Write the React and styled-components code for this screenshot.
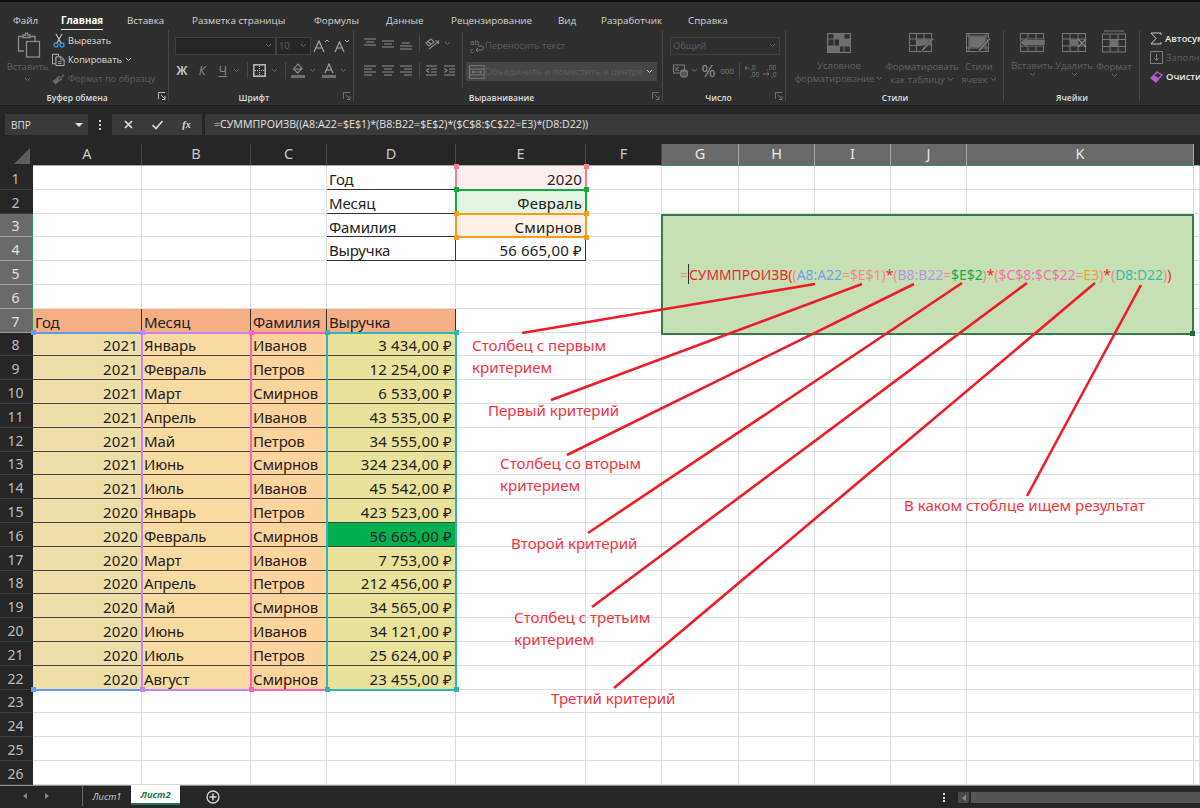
import React from "react";
import styled, { createGlobalStyle } from "styled-components";

const UI = `"Open Sans", "Noto Sans", "Liberation Sans", sans-serif`;
const CELLF = `"Noto Sans", "Open Sans", "Liberation Sans", sans-serif`;

const Global = createGlobalStyle`
  html, body { margin: 0; padding: 0; background: #262626; }
  * { box-sizing: border-box; }
`;

const Page = styled.div`
  position: relative; width: 1200px; height: 808px; overflow: hidden;
  display: flex; flex-direction: column; background: #262626; font-family: ${UI};
`;
const TabBar = styled.div`
  height: 30px; flex: none; background: #2f2f2f; border-top: 2px solid #0f0f0f;
  display: flex; align-items: flex-start; padding: 5px 0 0 13px;
`;
const Tab = styled.div`
  width: ${p => p.$w}px; flex: none; height: 18px;
`;
const TabText = styled.span`
  display: inline-block; font-size: 9.8px; line-height: 16px; height: 18px; white-space: nowrap;
  color: ${p => (p.$active ? "#fff" : "#d4d4d4")}; font-weight: ${p => (p.$active ? 700 : 400)};
  border-bottom: ${p => (p.$active ? "2px solid #e8e8e8" : "none")};
`;
const Ribbon = styled.div`
  height: 76px; flex: none; background: #2f2f2f; display: flex; overflow: hidden;
  border-bottom: 1px solid #1b1b1b;
`;
const Group = styled.div`
  position: relative; width: ${p => p.$w}px; flex: none; display: flex; flex-direction: column;
  &::after { content: ""; display: ${p => (p.$last ? "none" : "block")}; position: absolute; right: 0; top: 0; bottom: 4px; width: 1px; background: #474747; }
`;
const GroupBody = styled.div`
  flex: 1; display: flex; padding-left: ${p => p.$pl || 0}px; padding-top: ${p => p.$pt || 0}px; min-height: 0;
  flex-direction: ${p => p.$col ? "column" : "row"}; gap: ${p => p.$gap || 0}px;
`;
const SubCol = styled.div`
  width: ${p => p.$w}px; flex: none; display: flex; flex-direction: column; gap: ${p => p.$gap}px; padding: ${p => p.$pt}px 0 0 ${p => p.$pl || 0}px;
`;
const TallSep = styled.span`
  width: 1px; height: 56px; margin-top: 2px; background: #474747; flex: none;
`;
const GroupLabel = styled.div`
  height: 14px; line-height: 14px; font-size: 8.5px; font-weight: 600; color: #dcdcdc; text-align: center; flex: none;
  padding-right: ${p => p.$pr || 0}px;
`;
const Launcher = styled.svg`
  position: absolute; right: 3px; bottom: 5px; width: 8px; height: 8px; color: ${p => p.$dim ? "#6f6f6f" : "#b8b8b8"};
`;
const PasteBlock = styled.div`
  width: 55px; display: flex; flex-direction: column; align-items: center; padding-top: 2px; color: #8a8a8a;
  & > svg:first-child { margin-left: 3px; }
`;
const BigLabel = styled.div`
  font-size: 9.4px; line-height: 13px; color: #626262; text-align: center; white-space: nowrap; margin-top: ${p => p.$mt || 0}px;
  display: flex; align-items: center; justify-content: center; gap: 2px;
`;
const ChevronSvg = styled.svg`
  width: 7px; height: 5px; flex: none; color: ${p => p.$c || "#6a6a6a"};
`;
const ClipList = styled.div`
  display: flex; flex-direction: column; padding-top: 1px; margin-left: -3px;
`;
const ClipRow = styled.div`
  height: 19px; display: flex; align-items: center; gap: 3px; font-size: 9.2px; white-space: nowrap;
  color: ${p => p.$dim ? "#5f5f5f" : "#dedede"};
`;
const IconSlot = styled.span`
  width: ${p => p.$w}px; flex: none; display: flex; justify-content: center; align-items: center;
  margin-left: ${p => p.$ml || 0}px; color: ${p => p.$c || "#a8a8a8"}; font-size: 11px; font-weight: ${p => p.$bold ? 700 : 400};
  font-style: ${p => p.$it ? "italic" : "normal"}; text-decoration: ${p => p.$un ? "underline" : "none"};
  font-family: ${UI};
`;
const ToolRow = styled.div`
  display: flex; align-items: center; height: ${p => p.$h || 19}px; flex: none; padding-left: ${p => p.$pl || 0}px;
`;
const VSep = styled.span`
  width: 1px; height: 17px; background: #484848; flex: none; margin-left: ${p => p.$ml || 0}px;
`;
const Combo = styled.div`
  width: ${p => p.$w}px; height: 18px; flex: none; background: ${p => p.$bg || "#262626"}; border: 1px solid #414141;
  display: flex; align-items: center; justify-content: space-between; padding: 0 3px 0 2px;
  font-size: 9.4px; color: #606060; margin-left: ${p => p.$ml || 0}px;
`;
const InlineText = styled.span`
  font-size: 9.3px; white-space: nowrap; color: #5d5d5d; margin-left: ${p => p.$ml || 0}px; flex: ${p => p.$grow ? 1 : "none"};
`;
const MergeButton = styled.div`
  width: 191px; height: 19px; flex: none; background: #454545; display: flex; align-items: center; padding-left: 3px;
`;
const BigTool = styled.div`
  width: ${p => p.$w}px; flex: none; display: flex; flex-direction: column; align-items: center; padding-top: ${p => p.$pt ?? 3}px; color: #777;
  margin-left: ${p => p.$ml || 0}px;
`;
const EditList = styled.div`
  display: flex; flex-direction: column; padding: 0 0 0 10px; margin-top: -1px;
`;
const EditRow = styled.div`
  height: 19px; display: flex; align-items: center; gap: 3px; font-size: 9.4px; white-space: nowrap; font-weight: ${p => p.$dim ? 400 : 600};
  color: ${p => p.$dim ? "#5f5f5f" : "#e6e6e6"};
  svg { flex: none; }
`;

const Spacer = styled.div`
  height: 8px; flex: none; background: #262626;
`;
const FormulaBar = styled.div`
  height: 21px; flex: none; display: flex; background: #262626; padding-left: 5px; align-items: stretch;
`;
const NameBox = styled.div`
  width: 83px; background: #3a3a3a; color: #dcdcdc; font-size: 10px; display: flex; align-items: center; justify-content: space-between; padding: 0 5px 0 6px;
`;
const Caret = styled.span`
  width: 0; height: 0; border-left: 4px solid transparent; border-right: 4px solid transparent; border-top: 4px solid #e0e0e0;
`;
const Dots = styled.div`
  width: 24px; display: flex; flex-direction: column; align-items: center; justify-content: center; gap: 2px;
  span { width: 2px; height: 2px; background: #d0d0d0; }
`;
const FnBox = styled.div`
  width: 90px; background: #3a3a3a; display: flex; align-items: center; color: #d8d8d8;
`;
const FormulaInput = styled.div`
  flex: 1; margin-left: 3px; background: #3a3a3a; color: #e2e2e2; font-size: 10.65px; line-height: 21px; padding-left: 9px; white-space: nowrap;
`;
const GapBar = styled.div`
  height: 9px; flex: none; background: #262626;
`;
const SheetGrid = styled.div`
  flex: none; display: grid; background: #fff; height: 641px;
  grid-template-columns: 33px 109px 109px 76px 129px 130px 76px 77px 76px 76px 76px 227px 6px;
  grid-template-rows: 22px repeat(26, 23.8px);
`;
const Corner = styled.div`
  background: #262626; position: relative;
  &::after { content: ""; position: absolute; right: 3px; bottom: 2px; width: 0; height: 0; border-style: solid; border-width: 0 0 16px 16px; border-color: transparent transparent #5e5e5e transparent; }
`;
const ColHead = styled.div`
  background: ${p => p.$sel ? "#6a6a6a" : "#262626"}; color: ${p => p.$sel ? "#e8e8e8" : "#c8c8c8"}; font-family: ${CELLF}; font-size: 14.5px;
  display: flex; align-items: center; justify-content: center; padding-bottom: 3px;
  border-right: 1px solid ${p => p.$last ? "transparent" : p.$sel ? "#a8a8a8" : "#4c4c4c"};
  border-bottom: 1px solid ${p => p.$sel ? "#2f8f5b" : "#a8a8a8"};
`;
const RowHead = styled.div`
  background: ${p => p.$sel ? "#6a6a6a" : "#262626"}; color: ${p => p.$sel ? "#e0e0e0" : "#bdbdbd"}; font-family: ${CELLF}; font-size: 14px;
  display: flex; align-items: center; justify-content: center; padding: 2px 1px 0 0;
  border-bottom: 1px solid ${p => p.$sel ? "#a0a0a0" : "#3c3c3c"};
  border-right: 1px solid ${p => p.$sel ? "#2f8f5b" : "#262626"};
`;
const Cell = styled.div`
  background: ${p => p.$bg || "#fff"}; font-family: ${CELLF}; font-size: 15px; color: #222;
  letter-spacing: ${p => p.$right ? "0.18px" : "-0.15px"};
  display: flex; align-items: center; justify-content: ${p => p.$right ? "flex-end" : "flex-start"};
  padding: 3px 3px 0 2px; white-space: nowrap; overflow: hidden;
  border-right: 1px solid ${p => p.$line || "#dddddd"}; border-bottom: 1px solid ${p => p.$line || "#dddddd"};
`;
const RangeBox = styled.div`
  position: relative; z-index: 2; pointer-events: none; border: 2px solid ${p => p.$c}; margin: -1px;
  ${p => p.$noTop ? "border-top-color: transparent;" : ""}
  ${p => p.$noLeft ? "border-left-color: transparent;" : ""}
`;
const Handle = styled.i`
  position: absolute; width: 5px; height: 5px; background: ${p => p.$c};
  ${p => p.$pos.includes("t") ? "top: -3.5px;" : "bottom: -3.5px;"}
  ${p => p.$pos.includes("l") ? "left: -3.5px;" : "right: -3.5px;"}
`;
const Shape = styled.div`
  position: relative; z-index: 3; background: #c6dfb3; border: 2px solid #37794f; margin: 0 0 -2px -1px;
  display: flex; align-items: center; padding-left: 17px; font-family: ${CELLF}; font-size: 13.9px; white-space: nowrap;
`;
const Tok = styled.span` color: ${p => p.$c}; `;
const TextCaret = styled.span`
  display: inline-block; width: 1px; height: 20px; background: #333; vertical-align: middle;
`;
const ShapeHandle = styled.i`
  position: absolute; right: -3px; bottom: -3px; width: 5px; height: 5px; background: #216e45;
`;
const Footer = styled.div`
  flex: 1; display: flex; align-items: flex-start; background: #262626; border-top: 1px solid #8a8a8a; position: relative;
`;
const NavArrows = styled.div`
  width: 83px; height: 20px; display: flex; align-items: center; padding-left: 23px; gap: 18px; border-right: 1px solid #6a6a6a; flex: none;
`;
const NavArrow = styled.span`
  width: 0; height: 0; border-style: solid;
  border-width: ${p => p.$dir === "l" ? "3.5px 4px 3.5px 0" : "3.5px 0 3.5px 4px"};
  border-color: ${p => p.$dir === "l" ? "transparent #8a8a8a transparent transparent" : "transparent transparent transparent #8a8a8a"};
`;
const SheetTab = styled.div`
  height: 20px; display: flex; align-items: center; justify-content: center; width: ${p => p.$w}px; flex: none; font-size: 9.3px; font-style: italic;
  font-weight: ${p => p.$active ? 700 : 400}; background: ${p => p.$active ? "#fff" : "transparent"}; color: ${p => p.$active ? "#1d7a4c" : "#cfcfcf"};
  border-bottom: ${p => p.$active ? "2px solid #1d7a4c" : "none"}; margin-top: ${p => p.$active ? "-1px" : 0};
`;
const AddSheet = styled.svg`
  width: 14px; height: 14px; margin: 4px 0 0 26px; flex: none; color: #d8d8d8;
`;
const FootDots = styled.div`
  position: absolute; left: 943px; top: 7px; display: flex; flex-direction: column; gap: 1.5px;
  span { width: 2px; height: 2px; background: #ddd; }
`;
const ScrollBar = styled.div`
  position: absolute; left: 958px; right: 0; top: 6px; height: 11px; display: flex; gap: 2px;
`;
const ScrollBtn = styled.div`
  width: 11px; background: #4a4a4a; display: flex; align-items: center; justify-content: center;
  &::before { content: ""; border-style: solid; border-width: 3.5px 4px 3.5px 0; border-color: transparent #8a8a8a transparent transparent; }
`;
const ScrollThumb = styled.div` flex: 1; background: #565656; `;
const Overlay = styled.svg`
  position: absolute; left: 0; top: 0; z-index: 5; pointer-events: none; width: 1200px; height: 808px;
`;
const Note = styled.div`
  position: absolute; z-index: 6; left: ${p => p.$x}px; top: ${p => p.$y}px; color: #f5333f; font-family: ${CELLF}; font-size: 15.1px; line-height: 22px; white-space: pre; letter-spacing: -0.02px;
`;

/* ---------- icons ---------- */
const Svg = ({ w, h, vb, children, ...r }) => (
  <svg width={w} height={h} viewBox={vb || `0 0 ${w} ${h}`} fill="none" stroke="currentColor" {...r}>{children}</svg>
);
const Chev = ({ c }) => (
  <ChevronSvg viewBox="0 0 7 5" $c={c} fill="none" stroke="currentColor"><path d="M1 1l2.5 2.5L6 1" /></ChevronSvg>
);
const Launch = ({ dim }) => (
  <Launcher viewBox="0 0 8 8" $dim={dim} fill="none" stroke="currentColor"><path d="M.5 7V.5H7M3 3l4 4M7 4v3.5H4" /></Launcher>
);
const PasteIcon = () => (
  <Svg w={24} h={26} strokeWidth="1.3">
    <path d="M7 19H1.5V4.5H6M13 4.5h5V9" />
    <path d="M6 5V3h2.5V1.2h2V3H13v2.5H6z" />
    <rect x="9.5" y="9.5" width="13" height="15.5" />
  </Svg>
);
const Scissors = () => (
  <Svg w={12} h={15}>
    <path d="M3 1l5 9M9 1L4 10" stroke="#bdbdbd" strokeWidth="1.2" />
    <circle cx="3" cy="12" r="2" stroke="#3f8fd8" strokeWidth="1.3" />
    <circle cx="9" cy="12" r="2" stroke="#3f8fd8" strokeWidth="1.3" />
  </Svg>
);
const CopyIcon = () => (
  <Svg w={15} h={15} style={{ color: "#c8c8c8" }}>
    <path d="M4 12.5H.5V1.5h7V4" />
    <path d="M4.5 4.5h6l3.5 3v7h-9.500z" />
    <path d="M10 5v3h4M7 10h4M7 12h4" strokeWidth=".8" />
  </Svg>
);
const BrushIcon = () => (
  <Svg w={15} h={14} style={{ color: "#6a6a6a" }}>
    <path d="M8 4l3 3-2 2-3-3zM11 5l3-3" strokeWidth="1.4" />
    <path d="M6 6L1 9.500 4 13l4-3.500z" fill="currentColor" />
  </Svg>
);
const BigA = ({ up }) => (
  <Svg w={18} h={16} style={{ color: "#a5a5a5" }}>
    <path d={up ? "M1 14L6 3l5 11M3 10h6" : "M2 14L6.500 4 11 14M3.800 10h5.400"} strokeWidth="1.2" />
    <path d={up ? "M12 4l2-2 2 2" : "M12 2l2 2 2-2"} strokeWidth="1" />
  </Svg>
);
const BorderIcon = () => (
  <Svg w={13} h={13} style={{ color: "#bdbdbd" }}>
    <rect x=".8" y=".8" width="11.400" height="11.400" strokeWidth="1.5" />
    <path d="M6.500 2v9M2 6.500h9" strokeDasharray="1 1" strokeWidth="1" />
  </Svg>
);
const FillIcon = () => (
  <Svg w={14} h={15}>
    <path d="M7 1L2.500 6l4 4L11 5.500zM4 6h6" stroke="#8f8f8f" strokeWidth="1.1" />
    <rect x="0" y="12" width="14" height="3" fill="#6f6f6f" stroke="none" />
  </Svg>
);
const ColorAIcon = () => (
  <Svg w={14} h={15}>
    <path d="M3 10L7 1l4 9M4.500 7h5" stroke="#a0a0a0" strokeWidth="1.2" />
    <rect x="0" y="12" width="14" height="3" fill="#6f6f6f" stroke="none" />
  </Svg>
);
const Lines = ({ kind }) => {
  const rows = {
    top: "M1 2h12M3 5h8M1 8h12",
    mid: "M1 4h12M3 7h8M1 10h12",
    bot: "M3 6h8M1 9h12M1 12h12",
    left: "M1 2h12M1 5h8M1 8h12M1 11h8",
    center: "M1 2h12M3 5h8M1 8h12M3 11h8",
    right: "M1 2h12M5 5h8M1 8h12M5 11h8",
    outdent: "M1 2h11M6 5h6M6 8h6M1 11h11M4 4.500L1.500 6.500 4 8.500",
    indent: "M1 2h11M6 5h6M6 8h6M1 11h11M1.500 4.500L4 6.500 1.500 8.500",
  };
  return <Svg w={14} h={14} style={{ color: "#8d8d8d" }} strokeWidth="1.1"><path d={rows[kind]} /></Svg>;
};
const OrientIcon = () => (
  <Svg w={15} h={14} style={{ color: "#8d8d8d" }} strokeWidth="1.1">
    <path d="M1 6l5-4 3 3-5 4zM3 4.500l3 3M4 12l9-7M10 4h3.500v3" />
  </Svg>
);
const WrapIcon = () => (
  <Svg w={16} h={16} style={{ color: "#7a7a7a" }} strokeWidth="1">
    <text x="1" y="7" fontSize="8" fontFamily="Open Sans" fill="currentColor" stroke="none">ab</text>
    <text x="1" y="15" fontSize="8" fontFamily="Open Sans" fill="currentColor" stroke="none">c</text>
    <path d="M7 12h6c2 0 2-4 0-4H9M9 10l-2 2 2 2" />
  </Svg>
);
const MergeIcon = () => (
  <Svg w={16} h={14} style={{ color: "#7d7d7d" }} strokeWidth="1">
    <rect x=".5" y=".5" width="15" height="13" />
    <path d="M.5 4h15M.5 10h15M3 7h10M5 5.500L3 7l2 1.500M11 5.500L13 7l-2 1.500" />
  </Svg>
);
const MoneyIcon = () => (
  <Svg w={16} h={14} style={{ color: "#7a7a7a" }} strokeWidth="1">
    <rect x=".5" y="1" width="11" height="8" />
    <path d="M3 7V3M3 5l3-2M3 5l3 2" />
    <rect x="7.500" y="6" width="7" height="7" rx="2" fill="#6e6e6e" />
    <path d="M8 9h6M8 11h6" stroke="#2f2f2f" strokeWidth=".7" />
  </Svg>
);
const DecIcon = ({ more }) => (
  <Svg w={17} h={14} style={{ color: "#7e7e7e" }} strokeWidth=".9">
    {more ? (
      <>
        <text x="6" y="6" fontSize="6.500" fontFamily="Open Sans" fill="currentColor" stroke="none">,0</text>
        <text x="6" y="13" fontSize="6.500" fontFamily="Open Sans" fill="currentColor" stroke="none">,00</text>
        <path d="M5 4H1M2.500 2.500L1 4l1.500 1.500" />
      </>
    ) : (
      <>
        <text x="5" y="6" fontSize="6.500" fontFamily="Open Sans" fill="currentColor" stroke="none">,00</text>
        <text x="9" y="13" fontSize="6.500" fontFamily="Open Sans" fill="currentColor" stroke="none">,0</text>
        <path d="M1 10h6M5.500 8.500L7 10l-1.500 1.500" />
      </>
    )}
  </Svg>
);
const GridBase = ({ children, w = 24, h = 20 }) => (
  <Svg w={w} h={h} strokeWidth="1.2" style={{ color: "#777" }}>
    <rect x=".6" y=".6" width={w - 1.2} height={h - 1.2} />
    <path d={`M.6 6h${w - 1}M.6 13h${w - 1}M7 .6V${h}M${w - 7} .6V${h}`} strokeWidth=".9" />
    {children}
  </Svg>
);
const CondIcon = () => (
  <GridBase>
    <rect x="7" y="1" width="10" height="5" fill="#6e6e6e" stroke="none" />
    <rect x="12" y="6" width="11" height="7" fill="#6e6e6e" stroke="none" />
    <rect x="1" y="13" width="12" height="6" fill="#6e6e6e" stroke="none" />
  </GridBase>
);
const TableIcon = () => (
  <Svg w={26} h={21} style={{ color: "#777" }} strokeWidth="1">
    <rect x=".5" y=".5" width="22" height="18" />
    <path d="M.5 6h22M.5 12.500h12M7.500 1v17M15 1v8" />
    <rect x="8" y="6.500" width="14" height="6" fill="#6e6e6e" stroke="none" />
    <path d="M25 6L15 17l-3 3 1-4L23 5z" fill="#7c7c7c" stroke="#2f2f2f" strokeWidth=".6" />
  </Svg>
);
const StyleIcon = () => (
  <Svg w={26} h={21} style={{ color: "#777" }} strokeWidth="1">
    <rect x=".5" y=".5" width="22" height="18" />
    <path d="M.5 3h22M.5 15h22M3 .5v18M20 .5v18" />
    <rect x="3.500" y="3.500" width="16" height="11" fill="#6e6e6e" stroke="none" />
    <path d="M25 6L15 17l-3 3 1-4L23 5z" fill="#7c7c7c" stroke="#2f2f2f" strokeWidth=".6" />
  </Svg>
);
const InsertCells = () => (
  <Svg w={27} h={19} style={{ color: "#777" }} strokeWidth="1">
    <rect x="1.500" y=".5" width="23" height="18" />
    <path d="M1.500 6h23M1.500 13h23M9 .5v18M17 .5v18" />
    <path d="M26 6.500H8V4L1 9.500 8 15v-2.500h18z" fill="#6e6e6e" stroke="#2f2f2f" strokeWidth=".5" />
  </Svg>
);
const DeleteCells = () => (
  <Svg w={25} h={19} style={{ color: "#777" }} strokeWidth="1">
    <rect x=".5" y=".5" width="23" height="18" />
    <path d="M.5 6h23M.5 13h23M8 .5v18M16 .5v18" />
    <rect x="8" y="6.500" width="8" height="6" fill="#6e6e6e" stroke="none" />
    <path d="M16 6l8 8M24 6l-8 8" stroke="#8a8a8a" strokeWidth="1.2" />
  </Svg>
);
const FormatCells = () => (
  <Svg w={24} h={23} style={{ color: "#777" }} strokeWidth="1">
    <path d="M3 1h18M3 .2v2M21 .2v2" />
    <rect x=".5" y="4" width="23" height="18" />
    <path d="M.5 9.500h23M.5 16.500h23M8 4v18M16 4v18" />
    <rect x="8" y="10" width="8" height="6" fill="#6e6e6e" stroke="none" />
  </Svg>
);

/* ---------- data ---------- */
const COLS = ["A", "B", "C", "D", "E", "F", "G", "H", "I", "J", "K"];
const TABLE = [
  ["2021", "Январь", "Иванов", "3 434,00 ₽"],
  ["2021", "Февраль", "Петров", "12 254,00 ₽"],
  ["2021", "Март", "Смирнов", "6 533,00 ₽"],
  ["2021", "Апрель", "Иванов", "43 535,00 ₽"],
  ["2021", "Май", "Петров", "34 555,00 ₽"],
  ["2021", "Июнь", "Смирнов", "324 234,00 ₽"],
  ["2021", "Июль", "Иванов", "45 542,00 ₽"],
  ["2020", "Январь", "Петров", "423 523,00 ₽"],
  ["2020", "Февраль", "Смирнов", "56 665,00 ₽"],
  ["2020", "Март", "Иванов", "7 753,00 ₽"],
  ["2020", "Апрель", "Петров", "212 456,00 ₽"],
  ["2020", "Май", "Смирнов", "34 565,00 ₽"],
  ["2020", "Июнь", "Иванов", "34 121,00 ₽"],
  ["2020", "Июль", "Петров", "25 624,00 ₽"],
  ["2020", "Август", "Смирнов", "23 455,00 ₽"],
];
const TBG = ["#eedfa8", "#f9dba2", "#fed39c", "#e8e29b"];
const LOOKUP = [["Год", "2020", "#ffeeee"], ["Месяц", "Февраль", "#e3f4e3"], ["Фамилия", "Смирнов", "#fff2e4"], ["Выручка", "56 665,00 ₽", "#fff"]];

const cellProps = (r, c) => {
  if (r >= 1 && r <= 4 && c === 3) return { text: LOOKUP[r - 1][0], $line: "#333" };
  if (r >= 1 && r <= 4 && c === 4) return { text: LOOKUP[r - 1][1], $right: true, $bg: LOOKUP[r - 1][2], $line: "#333" };
  if (r === 7 && c < 4) return { text: ["Год", "Месяц", "Фамилия", "Выручка"][c], $bg: "#f4b084", $line: "#333" };
  if (r >= 8 && r <= 22 && c < 4) {
    const v = TABLE[r - 8][c];
    const bg = r === 16 && c === 3 ? "#00b050" : TBG[c];
    return { text: v, $bg: bg, $right: c === 0 || c === 3, $line: "#444" };
  }
  return { text: "" };
};
const RANGES = [
  { area: "9 / 2 / 24 / 3", c: "#5f9bf5", noLeft: true },
  { area: "9 / 3 / 24 / 4", c: "#c186fb" },
  { area: "9 / 4 / 24 / 5", c: "#fb62bd" },
  { area: "9 / 5 / 24 / 6", c: "#2fb5b3" },
  { area: "2 / 6 / 3 / 7", c: "#f5808a", noTop: true },
  { area: "3 / 6 / 4 / 7", c: "#14ac42" },
  { area: "4 / 6 / 5 / 7", c: "#f89c1c" },
];
const RED = "#e92a2a", PK = "#f48a8a";
const FORMULA = [
  ["СУММПРОИЗВ(", RED], ["(", PK], ["A8:A22", "#6fa3ee"], ["=", PK], ["$E$1", "#f48a8a"], [")", PK], ["*", RED],
  ["(", PK], ["B8:B22", "#b595e6"], ["=", PK], ["$E$2", "#16ad45"], [")", PK], ["*", RED],
  ["(", PK], ["$C$8:$C$22", "#f272b6"], ["=", PK], ["E3", "#f4a11f"], [")", PK], ["*", RED],
  ["(", PK], ["D8:D22", "#3fb9b3"], [")", PK], [")", RED],
];
const LINES = [
  [815, 284, 522, 333], [862, 284, 551, 400], [914, 284, 567, 455], [962, 283, 588, 533],
  [1027, 283, 592, 607], [1095, 283, 614, 688], [1141, 285, 1027, 496],
];
const NOTES = [
  [472, 334, "Столбец с первым\nкритерием"],
  [488, 399, "Первый критерий"],
  [500, 452, "Столбец со вторым\nкритерием"],
  [511, 532, "Второй критерий"],
  [514, 606, "Столбец с третьим\nкритерием"],
  [551, 687, "Третий критерий"],
  [904, 494, "В каком стоблце ищем результат"],
];
const TABS = [
  ["Файл", 48], ["Главная", 66], ["Вставка", 65], ["Разметка страницы", 122], ["Формулы", 72],
  ["Данные", 65], ["Рецензирование", 107], ["Вид", 43], ["Разработчик", 87], ["Справка", 60],
];

export default function App() {
  const sheet = [];
  sheet.push(<Corner key="corner" style={{ gridArea: "1 / 1" }} />);
  COLS.forEach((c, i) => sheet.push(<ColHead key={c} $sel={i >= 6} style={{ gridArea: `1 / ${i + 2}` }}>{c}</ColHead>));
  sheet.push(<ColHead key="L" $last style={{ gridArea: "1 / 13" }} />);
  for (let r = 1; r <= 26; r++) {
    sheet.push(<RowHead key={`r${r}`} $sel={r >= 3 && r <= 7} style={{ gridArea: `${r + 1} / 1` }}>{r}</RowHead>);
    for (let c = 0; c < 12; c++) {
      const { text, ...p } = cellProps(r, c);
      sheet.push(<Cell key={`${r}-${c}`} {...p} style={{ gridArea: `${r + 1} / ${c + 2}` }}>{text}</Cell>);
    }
  }
  return (
    <Page>
      <Global />
      <TabBar>{TABS.map(([t, w], i) => <Tab key={t} $w={w}><TabText $active={i === 1}>{t}</TabText></Tab>)}</TabBar>
      <Ribbon>
        <Group $w={169}>
          <GroupBody>
            <PasteBlock>
              <PasteIcon />
              <BigLabel $mt={2}>Вставить</BigLabel>
              <BigLabel $mt={4}><Chev /></BigLabel>
            </PasteBlock>
            <ClipList>
              <ClipRow><IconSlot $w={13}><Scissors /></IconSlot>Вырезать</ClipRow>
              <ClipRow><IconSlot $w={13}><CopyIcon /></IconSlot>Копировать <Chev c="#c8c8c8" /></ClipRow>
              <ClipRow $dim><IconSlot $w={13}><BrushIcon /></IconSlot>Формат по образцу</ClipRow>
            </ClipList>
          </GroupBody>
          <GroupLabel $pr={15}>Буфер обмена</GroupLabel>
          <Launch />
        </Group>
        <Group $w={185}>
          <GroupBody $col $pl={6} $pt={6} $gap={6}>
            <ToolRow>
              <Combo $w={101}><span /><Chev /></Combo>
              <Combo $w={35}>10<Chev /></Combo>
              <IconSlot $w={18} $ml={2}><BigA up /></IconSlot>
              <IconSlot $w={18} $ml={2}><BigA /></IconSlot>
            </ToolRow>
            <ToolRow>
              <IconSlot $w={14} $bold $c="#bdbdbd" style={{ fontSize: 12 }}>Ж</IconSlot>
              <IconSlot $w={14} $ml={6} $it $c="#8a8a8a" style={{ fontSize: 12 }}>К</IconSlot>
              <IconSlot $w={14} $ml={7} $un $c="#8a8a8a" style={{ fontSize: 12 }}>Ч</IconSlot>
              <IconSlot $w={8} $ml={2}><Chev /></IconSlot>
              <VSep $ml={7} />
              <IconSlot $w={13} $ml={5}><BorderIcon /></IconSlot>
              <IconSlot $w={8} $ml={4}><Chev /></IconSlot>
              <VSep $ml={7} />
              <IconSlot $w={14} $ml={5}><FillIcon /></IconSlot>
              <IconSlot $w={8} $ml={3}><Chev /></IconSlot>
              <IconSlot $w={14} $ml={6}><ColorAIcon /></IconSlot>
              <IconSlot $w={8} $ml={3}><Chev /></IconSlot>
            </ToolRow>
          </GroupBody>
          <GroupLabel $pr={15}>Шрифт</GroupLabel>
          <Launch dim />
        </Group>
        <Group $w={309}>
          <GroupBody>
            <SubCol $w={108} $pl={9} $pt={4} $gap={8}>
              <ToolRow>
                <IconSlot $w={14}><Lines kind="top" /></IconSlot>
                <IconSlot $w={14} $ml={4}><Lines kind="mid" /></IconSlot>
                <IconSlot $w={14} $ml={4}><Lines kind="bot" /></IconSlot>
                <VSep $ml={6} />
                <IconSlot $w={15} $ml={5}><OrientIcon /></IconSlot>
                <IconSlot $w={8} $ml={3}><Chev /></IconSlot>
              </ToolRow>
              <ToolRow>
                <IconSlot $w={14}><Lines kind="left" /></IconSlot>
                <IconSlot $w={14} $ml={4}><Lines kind="center" /></IconSlot>
                <IconSlot $w={14} $ml={4}><Lines kind="right" /></IconSlot>
                <VSep $ml={6} />
                <IconSlot $w={14} $ml={5}><Lines kind="outdent" /></IconSlot>
                <IconSlot $w={14} $ml={4}><Lines kind="indent" /></IconSlot>
              </ToolRow>
            </SubCol>
            <TallSep />
            <SubCol $w={200} $pl={3} $pt={6} $gap={7}>
              <ToolRow $pl={3}>
                <WrapIcon /><InlineText>Переносить текст</InlineText>
              </ToolRow>
              <ToolRow>
                <MergeButton>
                  <MergeIcon /><InlineText $grow>Объединить и поместить в центре</InlineText>
                  <IconSlot $w={12} style={{ marginRight: 2 }}><Chev c="#d0d0d0" /></IconSlot>
                </MergeButton>
              </ToolRow>
            </SubCol>
          </GroupBody>
          <GroupLabel $pr={14}>Выравнивание</GroupLabel>
          <Launch dim />
        </Group>
        <Group $w={123}>
          <GroupBody $col $pl={7} $pt={6} $gap={6}>
            <ToolRow><Combo $w={110} $bg="#2f2f2f">Общий<Chev /></Combo></ToolRow>
            <ToolRow>
              <IconSlot $w={16} $ml={3}><MoneyIcon /></IconSlot>
              <IconSlot $w={8} $ml={1}><Chev /></IconSlot>
              <IconSlot $w={17} $ml={2} $c="#929292" style={{ fontSize: 17 }}>%</IconSlot>
              <IconSlot $w={16} $ml={2} $c="#7e7e7e" style={{ fontSize: 8 }}>000</IconSlot>
              <VSep $ml={4} />
              <IconSlot $w={17} $ml={4}><DecIcon more /></IconSlot>
              <IconSlot $w={17} $ml={1}><DecIcon /></IconSlot>
            </ToolRow>
          </GroupBody>
          <GroupLabel $pr={12}>Число</GroupLabel>
          <Launch dim />
        </Group>
        <Group $w={218}>
          <GroupBody>
            <BigTool $w={102} $ml={2}><CondIcon /><BigLabel $mt={6}>Условное</BigLabel><BigLabel>форматирование<Chev /></BigLabel></BigTool>
            <BigTool $w={70} $ml={-3}><TableIcon /><BigLabel $mt={6}>Форматировать</BigLabel><BigLabel>как таблицу<Chev /></BigLabel></BigTool>
            <BigTool $w={30} $ml={7}><StyleIcon /><BigLabel $mt={6}>Стили</BigLabel><BigLabel>ячеек<Chev /></BigLabel></BigTool>
          </GroupBody>
          <GroupLabel>Стили</GroupLabel>
        </Group>
        <Group $w={136}>
          <GroupBody $pl={6}>
            <BigTool $w={44}><InsertCells /><BigLabel $mt={7}>Вставить</BigLabel><BigLabel><Chev /></BigLabel></BigTool>
            <BigTool $w={40}><DeleteCells /><BigLabel $mt={7}>Удалить</BigLabel><BigLabel><Chev /></BigLabel></BigTool>
            <BigTool $w={40} $pt={0}><FormatCells /><BigLabel $mt={7}>Формат</BigLabel><BigLabel><Chev /></BigLabel></BigTool>
          </GroupBody>
          <GroupLabel>Ячейки</GroupLabel>
        </Group>
        <Group $w={61} $last>
          <EditList>
            <EditRow><Svg w={12} h={13} style={{ color: "#c8c8c8" }} strokeWidth="1"><path d="M11 3V1H1l5 5.500L1 12h10v-2" /></Svg>Автосумма</EditRow>
            <EditRow $dim><Svg w={13} h={13} style={{ color: "#7a7a7a" }} strokeWidth="1"><rect x=".5" y=".5" width="12" height="12" /><path d="M6.500 3v6M4 7l2.500 2.500L9 7" /></Svg>Заполнить</EditRow>
            <EditRow><Svg w={13} h={12}><path d="M1 7l6-6 5 3-6 7z" stroke="#b45cc8" strokeWidth="1.300" /><path d="M1 7l3-3 5 3-3 4z" fill="#b45cc8" stroke="none" /></Svg>Очистить</EditRow>
          </EditList>
        </Group>
      </Ribbon>
      <Spacer />
      <FormulaBar>
        <NameBox>ВПР<Caret /></NameBox>
        <Dots><span /><span /><span /></Dots>
        <FnBox>
          <IconSlot $w={13} $ml={10} $c="#dcdcdc"><Svg w={11} h={11} strokeWidth="1.700"><path d="M2 2l7 7M9 2l-7 7" /></Svg></IconSlot>
          <IconSlot $w={13} $ml={16} $c="#dcdcdc"><Svg w={13} h={11} strokeWidth="1.700"><path d="M1.500 6l3.500 3.500L11.500 2" /></Svg></IconSlot>
          <IconSlot $w={13} $ml={16} $it $bold $c="#dcdcdc" style={{ fontSize: 10, fontFamily: "Liberation Serif, serif" }}>fx</IconSlot>
        </FnBox>
        <FormulaInput>=СУММПРОИЗВ((A8:A22=$E$1)*(B8:B22=$E$2)*($C$8:$C$22=E3)*(D8:D22))</FormulaInput>
      </FormulaBar>
      <GapBar />
      <SheetGrid>
        {sheet}
        {RANGES.map(rg => (
          <RangeBox key={rg.area} $c={rg.c} $noTop={rg.noTop} $noLeft={rg.noLeft} style={{ gridArea: rg.area }}>
            {["tl", "tr", "bl", "br"].map(pos => <Handle key={pos} $pos={pos} $c={rg.c} />)}
          </RangeBox>
        ))}
        <Shape style={{ gridArea: "4 / 8 / 9 / 13" }}>
          <Tok $c={PK}>=</Tok><TextCaret />
          {FORMULA.map(([t, c], i) => <Tok key={i} $c={c}>{t}</Tok>)}
          <ShapeHandle />
        </Shape>
      </SheetGrid>
      <Footer>
        <NavArrows><NavArrow $dir="l" /><NavArrow $dir="r" /></NavArrows>
        <SheetTab $w={48}>Лист1</SheetTab>
        <SheetTab $w={49} $active>Лист2</SheetTab>
        <AddSheet viewBox="0 0 14 14" fill="none" stroke="currentColor"><circle cx="7" cy="7" r="6" strokeWidth="1.300" /><path d="M7 3.500v7M3.500 7h7" strokeWidth="1.500" /></AddSheet>
        <FootDots><span /><span /><span /></FootDots>
        <ScrollBar><ScrollBtn /><ScrollThumb /></ScrollBar>
      </Footer>
      <Overlay viewBox="0 0 1200 808">
        {LINES.map(([a, b, c, d], i) => <line key={i} x1={a} y1={b} x2={c} y2={d} stroke="#ee1c25" strokeWidth="2.6" />)}
      </Overlay>
      {NOTES.map(([x, y, t]) => <Note key={t} $x={x} $y={y}>{t}</Note>)}
    </Page>
  );
}
